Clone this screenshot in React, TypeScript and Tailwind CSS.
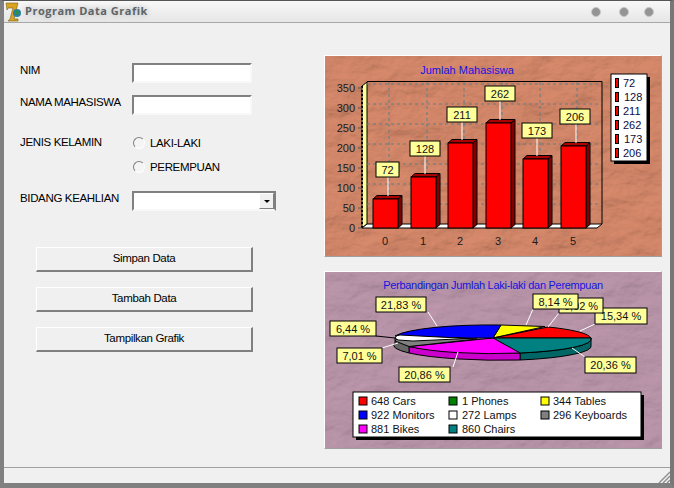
const bars = [
  { v: 72, x: 373, top: 199, box: [376, 162, 23], stalk: 388, tick: 385, grid: 389 },
  { v: 128, x: 411, top: 177, box: [410, 141, 30], stalk: 425, tick: 423, grid: 427 },
  { v: 211, x: 448, top: 143, box: [447, 107, 30], stalk: 462, tick: 460, grid: 464 },
  { v: 262, x: 486, top: 123, box: [485, 86, 30], stalk: 500, tick: 498, grid: 502 },
  { v: 173, x: 523, top: 159, box: [522, 123, 30], stalk: 537, tick: 535, grid: 540 },
  { v: 206, x: 561, top: 146, box: [560, 109, 30], stalk: 576, tick: 573, grid: 577 },
];

const pieLabels = [
  { t: "21,83 %", x: 376, y: 297, w: 50, h: 15, line: "428,312 437,326", c: "#fff" },
  { t: "15,34 %", x: 595, y: 308, w: 52, h: 16, line: "595,324 580,331", c: "#fff" },
  { t: "0,02 %", x: 559, y: 298, w: 44, h: 15, line: "559,313 548,327", c: "#fff" },
  { t: "8,14 %", x: 533, y: 294, w: 45, h: 15, line: "533,309 526,325", c: "#fff" },
  { t: "6,44 %", x: 330, y: 321, w: 46, h: 15, line: "376,336 395,338", c: "#000" },
  { t: "7,01 %", x: 337, y: 348, w: 45, h: 15, line: "382,348 398,343", c: "#fff" },
  { t: "20,86 %", x: 399, y: 367, w: 51, h: 15, line: "458,352 453,367", c: "#fff" },
  { t: "20,36 %", x: 585, y: 357, w: 51, h: 16, line: "585,357 572,348", c: "#fff" },
];

const pieLegend = [
  { c: "#ff0000", t: "648 Cars", col: 0, row: 0 },
  { c: "#008000", t: "1 Phones", col: 1, row: 0 },
  { c: "#ffff00", t: "344 Tables", col: 2, row: 0 },
  { c: "#0000ff", t: "922 Monitors", col: 0, row: 1 },
  { c: "#ffffff", t: "272 Lamps", col: 1, row: 1 },
  { c: "#808080", t: "296 Keyboards", col: 2, row: 1 },
  { c: "#ff00ff", t: "881 Bikes", col: 0, row: 2 },
  { c: "#008080", t: "860 Chairs", col: 1, row: 2 },
];

const legendX = [[359, 371], [449, 462], [541, 553]];

const Paper = ({ id, color, scale }: { id: string; color: string; scale: number }) => (
  <filter id={id} x="0" y="0" width="100%" height="100%">
    <feTurbulence type="fractalNoise" baseFrequency="0.03 0.045" numOctaves="6" seed="11" />
    <feDiffuseLighting surfaceScale={scale} lightingColor={color}>
      <feDistantLight azimuth="60" elevation="66" />
    </feDiffuseLighting>
  </filter>
);

const BarChart = () => (
  <svg width="336" height="200" viewBox="325 56 336 200" className="block">
    <defs>
      <Paper id="brick" color="#d88a6c" scale={3} />
    </defs>
    <rect x="325" y="56" width="336" height="200" filter="url(#brick)" />
    <text x="467" y="74" textAnchor="middle" fill="#1414e0">Jumlah Mahasiswa</text>

    {/* walls */}
    <polygon points="362,86 367,82 367,224 362,228" fill="#ffff99" stroke="#000" />
    <path d="M367 81.5H602V224" fill="none" stroke="#000" />
    {[0, 1, 2, 3, 4, 5, 6].map((i) => (
      <line key={i} x1="367" x2="601" y1={84 + i * 20} y2={84 + i * 20} stroke="#58808c" strokeDasharray="3 3" />
    ))}
    {bars.map((b) => (
      <line key={b.v} x1={b.grid} x2={b.grid} y1="82" y2="224" stroke="#58808c" strokeDasharray="3 3" />
    ))}
    <polygon points="362,228 367,224 602,224 597,228" fill="#fff" stroke="#000" />
    <line x1="362" x2="362" y1="86" y2="228" stroke="#000" strokeDasharray="2 2" strokeWidth="2" />

    {/* y axis */}
    {[0, 50, 100, 150, 200, 250, 300, 350].map((v) => (
      <g key={v}>
        <line x1="358" x2="362" y1={228 - v * 0.4} y2={228 - v * 0.4} stroke="#555" />
        <text x="355" y={232 - v * 0.4} textAnchor="end" fill="#1a1a1a">{v}</text>
      </g>
    ))}

    {/* bars */}
    {bars.map((b, i) => (
      <g key={b.v}>
        <polygon points={`${b.x},${b.top} ${b.x + 4},${b.top - 3.5} ${b.x + 29},${b.top - 3.5} ${b.x + 25},${b.top}`} fill="#aa0000" stroke="#000" />
        <polygon points={`${b.x + 25},${b.top} ${b.x + 29},${b.top - 3.5} ${b.x + 29},224.5 ${b.x + 25},228`} fill="#800000" stroke="#000" />
        <rect x={b.x} y={b.top} width="25" height={228 - b.top} fill="#ff0000" stroke="#000" />
        <line x1={b.stalk} x2={b.stalk} y1={b.box[1] + 15} y2={b.top - 3} stroke="#fff" />
        <rect x={b.box[0]} y={b.box[1]} width={b.box[2]} height="15" fill="#ffff99" stroke="#000" />
        <text x={b.box[0] + b.box[2] / 2} y={b.box[1] + 12} textAnchor="middle" fill="#111">{b.v}</text>
        <text x={b.tick} y="245" textAnchor="middle" fill="#1a1a1a">{i}</text>
      </g>
    ))}

    {/* legend */}
    <rect x="614" y="77" width="36" height="87" fill="#000" />
    <rect x="611" y="74" width="36" height="87" fill="#fff" stroke="#000" />
    {bars.map((b, i) => (
      <g key={b.v}>
        <rect x="615.5" y={78.5 + i * 14} width="3" height="9" fill="#ff0000" stroke="#000" />
        <text x={b.v === 128 || b.v === 173 ? 624 : 623} y={87 + i * 14} fill="#0c0c40">{b.v}</text>
      </g>
    ))}
  </svg>
);

const PieChart = () => (
  <svg width="336" height="176" viewBox="325 272 336 176" className="block">
    <defs>
      <Paper id="mauve" color="#bd98ad" scale={2.2} />
    </defs>
    <rect x="325" y="272" width="336" height="176" filter="url(#mauve)" />
    <text x="493" y="289" textAnchor="middle" fill="#1414e0" className="tracking-[-0.28px]">
      Perbandingan Jumlah Laki-laki dan Perempuan
    </text>

    {/* pie sides */}
    <g stroke="#000" strokeLinejoin="round">
      <path d="M591 338V345A98 14.5 0 0 1 520 360V353A98 14.5 0 0 0 591 338Z" fill="#006666" />
      <path d="M520 353V360A110 16 0 0 1 409 353V346.5A110 16 0 0 0 520 353Z" fill="#cc00cc" />
      <path d="M409 346.5V353A98 14.5 0 0 1 395 343V338Z" fill="#666666" />

      {/* pie top */}
      <path d="M493 338L501 325L545 326.5Z" fill="#ffff00" />
      <path d="M493 338L548 327A98 14.5 0 0 1 591 338Z" fill="#ff0000" />
      <path d="M493 338L591 338A98 14.5 0 0 1 520 353Z" fill="#008080" />
      <path d="M493 338L520 353A100 16 0 0 1 409 346.5Z" fill="#ff00ff" />
      <path d="M477 339L409 346.5L395 341L400 335Z" fill="#808080" />
      <path d="M501 325A98 14.5 0 0 0 395 336L468 338L493 338Z" fill="#0000ff" />
      <path d="M395 338Q396 335 400 335L468 338.5L413 341L398 340Z" fill="#ffffff" />
    </g>

    {/* labels */}
    {pieLabels.map((l) => (
      <polyline key={l.t + "l"} points={l.line} stroke={l.c} fill="none" />
    ))}
    {pieLabels.map((l) => (
      <g key={l.t}>
        <rect x={l.x} y={l.y} width={l.w} height={l.h} fill="#ffff99" stroke="#000" />
        <text x={l.x + l.w / 2} y={l.y + 12} textAnchor="middle" fill="#111">{l.t}</text>
      </g>
    ))}

    {/* legend */}
    <rect x="356" y="395" width="288" height="45" fill="#000" />
    <rect x="353" y="392" width="288" height="45" fill="#fff" stroke="#000" />
    {pieLegend.map((e) => (
      <g key={e.t}>
        <rect x={legendX[e.col][0]} y={397 + e.row * 14} width="8" height="8" fill={e.c} stroke="#000" />
        <text x={legendX[e.col][1]} y={405 + e.row * 14} fill="#111">{e.t}</text>
      </g>
    ))}
  </svg>
);

const Radio = ({ label }: { label: string }) => (
  <label className="flex h-[24px] items-center gap-[5px]">
    <span className="h-[12px] w-[12px] rounded-full border border-t-[#808080] border-l-[#808080] border-r-white border-b-white bg-[#f4f4f4]" />
    <span>{label}</span>
  </label>
);

const Field = () => (
  <div className="h-[20px] w-[120px] border-2 border-t-[#808080] border-l-[#808080] border-r-[#f8f8f8] border-b-[#f8f8f8] bg-white" />
);

const FormButton = ({ label }: { label: string }) => (
  <button className="h-[25px] w-[217px] border border-r-2 border-b-2 border-t-white border-l-white border-r-[#808080] border-b-[#808080] bg-[#f0f0f0] pb-[2px] text-center">
    {label}
  </button>
);

const App = () => {
  return (
    <div className="flex h-[488px] w-[674px] flex-col overflow-hidden border-t border-t-[#555] border-b-[5px] border-l-4 border-r-4 border-b-[#808080] border-l-[#808080] border-r-[#777] bg-[#f0f0f0] font-['Liberation_Sans',sans-serif] text-[11px] text-black">
      {/* title bar */}
      <div className="flex h-[22px] shrink-0 items-center border-b border-b-[#a8a8a8] bg-gradient-to-b from-[#f8f8f8] to-[#e6e6e6] pr-[16px]">
        <svg width="18" height="20" viewBox="0 0 18 20" className="ml-[1px] shrink-0">
          <path d="M1 1H13L9 17H13V19H3L5 17L8 6H3L2 8Z" fill="#d9a520" stroke="#7a5a10" strokeWidth="0.6" />
          <circle cx="12" cy="11" r="4" fill="#2a7fa0" />
          <path d="M10 9L13 8.5L14 11L12 13L10.5 12Z" fill="#2f8f3f" />
        </svg>
        <span className="ml-[2px] font-['Open_Sans',sans-serif] text-[11px] font-bold tracking-[0.5px] text-[#5c6468] [text-shadow:0_0_6px_#b0b0b0]">
          Program Data Grafik
        </span>
        <div className="ml-auto flex items-center">
          <span className="h-[10px] w-[10px] rounded-full border border-[#c8c8c8] bg-[#949494]" />
          <span className="ml-[18px] h-[10px] w-[10px] rounded-full border border-[#c8c8c8] bg-[#949494]" />
          <span className="ml-[15px] h-[10px] w-[10px] rounded-full border border-[#c8c8c8] bg-[#949494]" />
        </div>
      </div>

      {/* form and charts */}
      <div className="flex flex-1">
        <div className="w-[320px] shrink-0 pt-[40px] pl-[16px] text-[11.5px] leading-[14px] tracking-[-0.35px]">
          <div className="flex">
            <span className="w-[112px]">NIM</span>
            <Field />
          </div>
          <div className="mt-[12px] flex">
            <span className="w-[112px]">NAMA MAHASISWA</span>
            <Field />
          </div>
          <div className="mt-[16px] flex">
            <span className="w-[113px] pt-[4px]">JENIS KELAMIN</span>
            <div className="flex flex-col">
              <Radio label="LAKI-LAKI" />
              <Radio label="PEREMPUAN" />
            </div>
          </div>
          <div className="mt-[12px] flex">
            <span className="w-[112px]">BIDANG KEAHLIAN</span>
            <div className="flex h-[20px] w-[144px] items-center justify-end border-2 border-t-[#808080] border-l-[#808080] border-r-[#808080] border-b-[#f8f8f8] bg-white">
              <div className="flex h-[16px] w-[15px] items-center justify-center border border-t-white border-l-white border-r-[#808080] border-b-[#808080] bg-[#f0f0f0]">
                <span className="mt-[1px] h-0 w-0 border-x-[3px] border-t-[3px] border-x-transparent border-t-black" />
              </div>
            </div>
          </div>
          <div className="mt-[36px] ml-[16px] flex flex-col gap-[15px]">
            <FormButton label="Simpan Data" />
            <FormButton label="Tambah Data" />
            <FormButton label="Tampilkan Grafik" />
          </div>
        </div>

        <div className="flex flex-col gap-[14px] pt-[32px]">
          <div className="border border-t-white border-l-white border-r-[#a0a0a0] border-b-[#a0a0a0]">
            <BarChart />
          </div>
          <div className="border border-t-white border-l-white border-r-[#a0a0a0] border-b-[#a0a0a0]">
            <PieChart />
          </div>
        </div>
      </div>

      {/* status bar */}
      <div className="flex h-[16px] shrink-0 items-end justify-end border-t border-t-[#a0a0a0]">
        <svg width="12" height="12" viewBox="0 0 12 12" className="block">
          <path d="M1 12L12 1M5 12L12 5M9 12L12 9" stroke="#8c8c8c" strokeWidth="1.4" />
        </svg>
      </div>
    </div>
  );
};

export default App;
